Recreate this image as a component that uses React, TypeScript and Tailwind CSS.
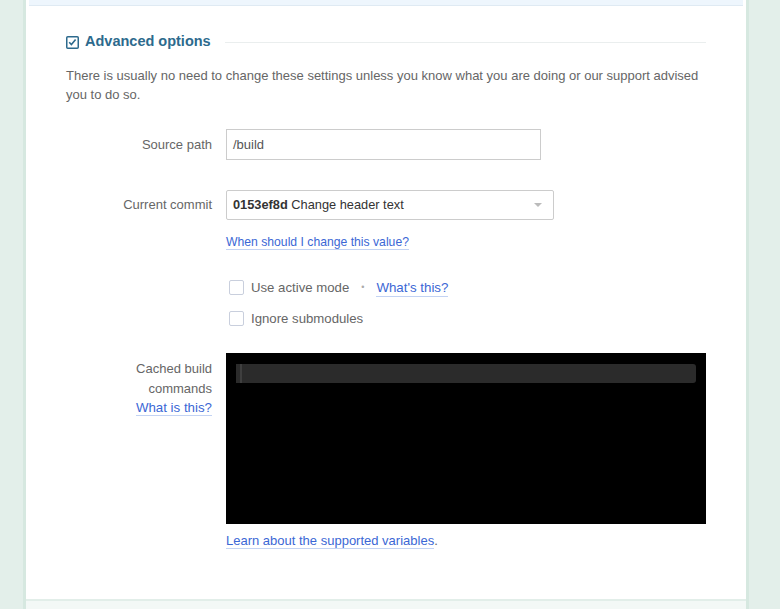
export default function App() {
  const font = { fontFamily: '"Liberation Sans", Arial, sans-serif' }

  return (
    <div className="h-[609px] w-[780px] overflow-hidden bg-[#e3efea] text-[13px]" style={font}>
      <div className="ml-[23px] flex h-full w-[726px] flex-col border-x-[3px] border-[#d6e8e0] bg-white">
        {/* previous card edge */}
        <div className="mx-[3px] h-[6px] shrink-0 border-b border-[#dfeaf3] bg-[#eef6fd]" />

        <div className="flex h-[593px] shrink-0 flex-col px-[40px]">
          {/* heading */}
          <div className="mt-[26px] flex h-[20px] items-center">
            <svg width="13" height="13" viewBox="0 0 13 13" className="mr-[6px] shrink-0">
              <rect x="0.75" y="0.75" width="11.5" height="11.5" rx="1" fill="none" stroke="#2d6a8d" strokeWidth="1.5" />
              <path d="M3.2 6.3 L5.4 8.6 L9.6 3.4" fill="none" stroke="#2d6a8d" strokeWidth="1.6" />
            </svg>
            <span className="text-[14.5px] font-bold text-[#2d6a8d]">Advanced options</span>
            <div className="ml-[14px] h-px flex-1 bg-[#eaeeee]" />
          </div>

          <p className="mt-[14px] leading-[19px] text-[#666]">
            There is usually no need to change these settings unless you know what you are doing or our support advised you to do so.
          </p>

          {/* source path */}
          <div className="mt-[25px] flex items-center">
            <label className="w-[146px] shrink-0 text-right text-[#666]">Source path</label>
            <div className="ml-[14px] flex h-[31px] w-[315px] items-center border border-[#cccccc] px-[6px] text-[#555]">
              /build
            </div>
          </div>

          {/* current commit */}
          <div className="mt-[30px] flex items-center">
            <label className="w-[146px] shrink-0 text-right text-[#666]">Current commit</label>
            <div className="ml-[14px] flex h-[30px] w-[328px] items-center justify-between rounded-[2px] border border-[#cccccc] pl-[6px] pr-[11px] text-[12.8px] text-[#333]">
              <span>
                <b>0153ef8d</b> Change header text
              </span>
              <span className="h-0 w-0 border-x-[4px] border-t-[4px] border-x-transparent border-t-[#bbbbbb]" />
            </div>
          </div>
          <div className="ml-[160px] mt-[12px] leading-[19px]">
            <a className="border-b border-[#c3d3f3] text-[12.2px] text-[#3b67d5]">When should I change this value?</a>
          </div>

          {/* checkboxes */}
          <div className="ml-[163px] mt-[26px] flex h-[19px] items-center">
            <span className="h-[15px] w-[15px] rounded-[2px] border border-[#c9cfdd]" />
            <span className="ml-[7px] text-[13.2px] text-[#666]">Use active mode</span>
            <span className="mx-[12px] text-[9px] text-[#aaa]">•</span>
            <a className="border-b border-[#c3d3f3] text-[13.3px] leading-[17px] text-[#3b67d5]">What's this?</a>
          </div>
          <div className="ml-[163px] mt-[12px] flex h-[19px] items-center">
            <span className="h-[15px] w-[15px] rounded-[2px] border border-[#c9cfdd]" />
            <span className="ml-[7px] text-[13.2px] text-[#666]">Ignore submodules</span>
          </div>

          {/* cached build commands */}
          <div className="mt-[25px] flex items-start">
            <div className="w-[146px] shrink-0 pt-[6px] text-right leading-[19.5px] text-[#666]">
              Cached build
              <br />
              commands
              <br />
              <a className="border-b border-[#c3d3f3] text-[13.3px] text-[#3b67d5]">What is this?</a>
            </div>
            <div className="ml-[14px] h-[171px] w-[480px] bg-black px-[10px] pt-[11px]">
              <div className="flex h-[19px] rounded-r-[3px] bg-[#2b2b2b]">
                <span className="ml-[4px] w-[2px] bg-[#3f3f3f]" />
              </div>
            </div>
          </div>
          <div className="ml-[160px] mt-[7px] leading-[19px] text-[#666]">
            <a className="border-b border-[#c3d3f3] text-[#3b67d5]">Learn about the supported variables</a>.
          </div>
        </div>

        <div className="h-[2px] shrink-0 bg-[#e2eee9]" />
        <div className="flex-1 bg-[#f3f8f6]" />
      </div>
    </div>
  )
}
